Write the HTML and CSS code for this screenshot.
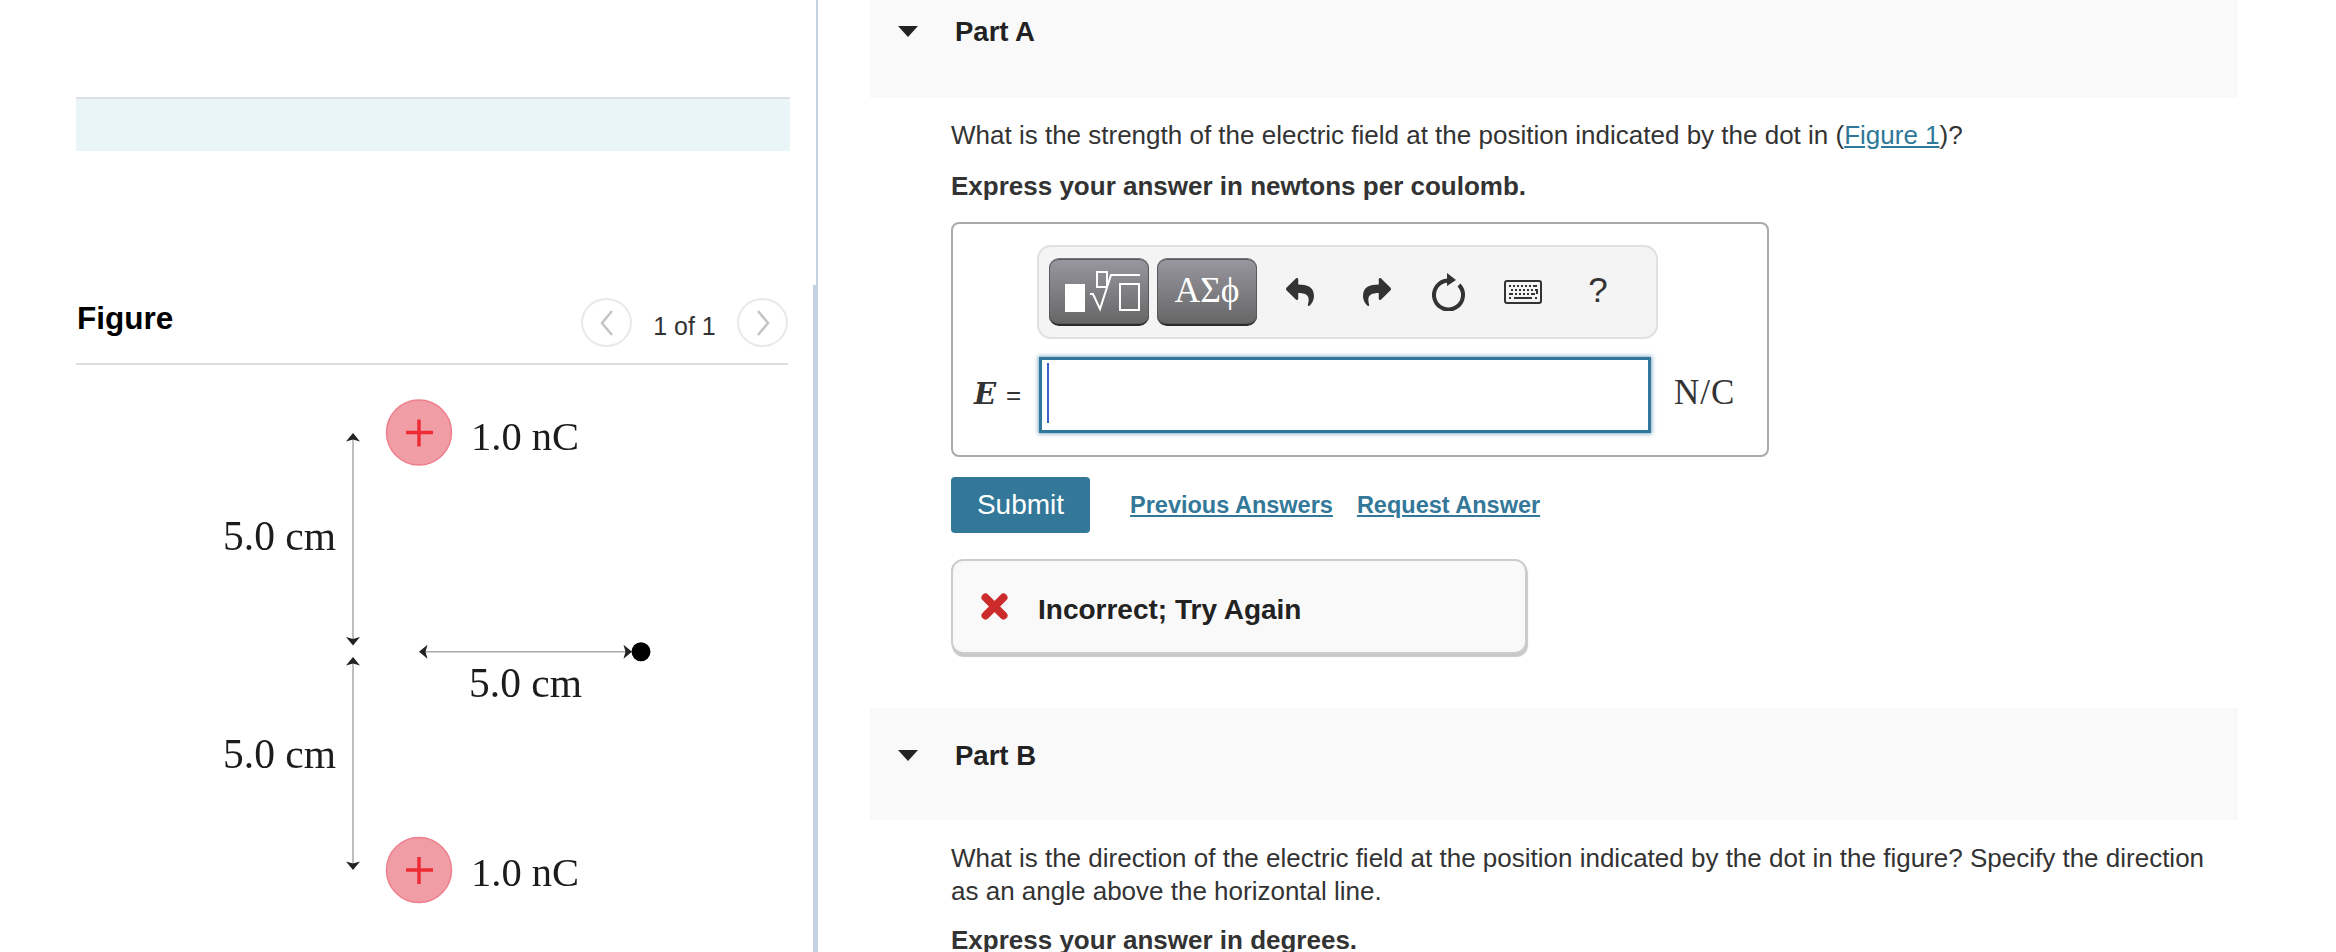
FILE: index.html
```html
<!DOCTYPE html>
<html lang="en">
<head>
<meta charset="utf-8">
<title>Part A</title>
<link rel="stylesheet" href="styles.css">
</head>
<body>
<div class="page">
  <aside class="left">
    <div class="strip"></div>
    <div class="fig-head">
      <h2 class="fig-title">Figure</h2>
      <div class="pager">
        <span class="pager-btn"><svg width="16" height="28" viewBox="0 0 16 28"><path class="chev" d="M13 2 3 14l10 12"/></svg></span>
        <span class="pager-text">1 of 1</span>
        <span class="pager-btn"><svg width="16" height="28" viewBox="0 0 16 28"><path class="chev" d="M3 2l10 12L3 26"/></svg></span>
      </div>
    </div>
    <svg class="figure" width="714" height="587" viewBox="76 365 714 587">
      <line class="dim" x1="353" y1="438" x2="353" y2="640"/>
      <line class="dim" x1="353" y1="662" x2="353" y2="865"/>
      <line class="dim" x1="425" y1="651.700" x2="626" y2="651.700"/>
      <path class="head" d="M353 433l7 8.500-7-2-7 2z"/>
      <path class="head" d="M353 645.500l7-8.500-7 2-7-2z"/>
      <path class="head" d="M353 657l7 8.500-7-2-7 2z"/>
      <path class="head" d="M353 870l7-8.500-7 2-7-2z"/>
      <path class="head" d="M419 651.700l8.500-7-2 7 2 7z"/>
      <path class="head" d="M632 651.700l-8.500-7 2 7-2 7z"/>
      <circle cx="641" cy="651.700" r="9.500"/>
      <circle class="charge" cx="419" cy="432.500" r="32.500"/>
      <path class="plus" d="M406 432.500h27M419 419.500v27"/>
      <circle class="charge" cx="419" cy="870" r="32.500"/>
      <path class="plus" d="M406 870h27M419 857v27"/>
      <text class="fig-label" x="471" y="450">1.0 nC</text>
      <text class="fig-label fig-label-cm" x="223" y="550">5.0 cm</text>
      <text class="fig-label fig-label-cm" x="469" y="697">5.0 cm</text>
      <text class="fig-label fig-label-cm" x="223" y="768">5.0 cm</text>
      <text class="fig-label" x="471" y="886">1.0 nC</text>
    </svg>
    <div class="scroll-thumb"></div>
  </aside>

  <main class="right">
    <div class="part-head part-head-a">
      <svg class="caret" width="20" height="11" viewBox="0 0 20 11"><path d="M0 0h20L10 11z"/></svg>
      <span class="part-title">Part A</span>
    </div>
    <section class="question question-a">
      <p class="q-text">What is the strength of the electric field at the position indicated by the dot in (<a class="fig-link" href="#">Figure 1</a>)?</p>
      <p class="q-hint">Express your answer in newtons per coulomb.</p>

      <div class="answer">
        <div class="toolbar">
          <button class="tool-btn tool-btn-a" type="button">
            <svg width="100" height="68" viewBox="0 0 100 68">
              <rect class="ico-fill" x="16" y="26" width="20" height="28"/>
              <rect class="ico-line" x="48" y="14" width="10" height="15"/>
              <path class="ico-line" d="M41 36h3l7 15 11-34h29"/>
              <rect class="ico-line" x="71" y="26" width="19" height="26"/>
            </svg>
          </button>
          <button class="tool-btn tool-btn-b" type="button">ΑΣϕ</button>
          <span class="slot slot-undo">
            <svg class="ico" width="28" height="32" viewBox="0 0 512 512" preserveAspectRatio="none"><path d="M8.309 189.836L184.313 37.851C199.719 24.546 224 35.347 224 56.015v80.053c160.629 1.839 288 34.032 288 186.258 0 61.441-39.581 122.309-83.333 154.132-13.653 9.931-33.111-2.533-28.077-18.631 45.344-145.012-21.507-183.51-176.59-185.742V360c0 20.7-24.3 31.453-39.687 18.164l-176.004-152c-11.071-9.562-11.086-26.753 0-36.328z"/></svg>
          </span>
          <span class="slot slot-redo">
            <svg class="ico flip" width="28" height="32" viewBox="0 0 512 512" preserveAspectRatio="none"><path d="M8.309 189.836L184.313 37.851C199.719 24.546 224 35.347 224 56.015v80.053c160.629 1.839 288 34.032 288 186.258 0 61.441-39.581 122.309-83.333 154.132-13.653 9.931-33.111-2.533-28.077-18.631 45.344-145.012-21.507-183.51-176.59-185.742V360c0 20.7-24.3 31.453-39.687 18.164l-176.004-152c-11.071-9.562-11.086-26.753 0-36.328z"/></svg>
          </span>
          <span class="slot slot-reset">
            <svg width="34" height="38" viewBox="0 0 34 38"><path class="reset-arc" d="M16 7.500A14.500 14.500 0 1 0 27 12"/><path class="reset-head" d="M15 0l9 7-9 6z"/></svg>
          </span>
          <span class="slot slot-kbd">
            <svg width="38" height="24" viewBox="0 0 38 24">
              <rect class="kbd-frame" x="1" y="1" width="36" height="22" rx="2"/>
              <path class="kbd-keys" d="M5 6h2M9 6h2M13 6h2M17 6h2M21 6h2M25 6h2M29 6h4M7 10h2M11 10h2M15 10h2M19 10h2M23 10h2M27 10h2M31 10h2v4M5 14h4M11 14h2M15 14h2M19 14h2M23 14h2M27 14h4M5 18h2M10 18h18M31 18h2"/>
            </svg>
          </span>
          <span class="slot slot-help">?</span>
        </div>
        <div class="input-row">
          <span class="var-label"><span class="var">E</span><span class="eq">=</span></span>
          <div class="math-input"><span class="text-caret"></span></div>
          <span class="unit">N/C</span>
        </div>
      </div>

      <div class="actions">
        <button class="submit" type="button">Submit</button>
        <a class="act-link" href="#">Previous Answers</a>
        <a class="act-link" href="#">Request Answer</a>
      </div>

      <div class="feedback">
        <svg class="x-icon" width="27" height="27" viewBox="0 0 27 27"><path class="x-mark" d="M4.500 4.500l18 18M22.500 4.500l-18 18"/></svg>
        <span class="feedback-text">Incorrect; Try Again</span>
      </div>
    </section>

    <div class="part-head part-head-b">
      <svg class="caret" width="20" height="11" viewBox="0 0 20 11"><path d="M0 0h20L10 11z"/></svg>
      <span class="part-title">Part B</span>
    </div>
    <section class="question question-b">
      <p class="q-text">What is the direction of the electric field at the position indicated by the dot in the figure? Specify the direction as an angle above the horizontal line.</p>
      <p class="q-hint">Express your answer in degrees.</p>
    </section>
  </main>
</div>
</body>
</html>
```

FILE: styles.css
```css
* { box-sizing: border-box; }
html, body { margin: 0; height: 100%; overflow: hidden; background: #fff; }
body { font-family: "Liberation Sans", Arial, sans-serif; color: #333; }
p, h2 { margin: 0; }

.page { display: flex; height: 952px; overflow: hidden; }

/* Left panel */
.left {
  position: relative;
  flex: 0 0 818px;
  padding-left: 76px;
  border-right: 2px solid #c3d1e2;
}
.strip {
  width: 714px;
  height: 54px;
  margin-top: 97px;
  background: #e9f5f7;
  border-top: 2px solid #dde0e2;
}
.fig-head {
  display: flex;
  justify-content: space-between;
  width: 712px;
  height: 214px;
  padding-top: 147px;
  border-bottom: 2px solid #dedede;
}
.fig-title { margin-left: 1px; font-size: 31.500px; line-height: 40px; font-weight: 700; color: #000; }
.pager { display: flex; align-items: flex-start; }
.pager-btn {
  display: flex;
  align-items: center;
  justify-content: center;
  width: 51px;
  height: 49px;
  border: 2px solid #e9e9e9;
  border-radius: 50%;
}
.chev { fill: none; stroke: #c4c4c4; stroke-width: 2.500; }
.pager-text { width: 105px; padding-top: 13px; text-align: center; font-size: 25px; line-height: 30px; color: #333; }
.figure { display: block; filter: blur(0.4px); }
.dim { stroke: #a8a8a8; stroke-width: 1.500; }
.head { fill: #222; }
.charge { fill: #f19da6; stroke: #ee7f8d; stroke-width: 1.500; }
.plus { fill: none; stroke: #ee2c36; stroke-width: 3.500; }
.fig-label { font-family: "Liberation Serif", "Times New Roman", serif; font-size: 40.500px; fill: #1c1c1c; }
.fig-label-cm { font-size: 41.500px; }
.scroll-thumb {
  position: absolute;
  top: 285px;
  right: -2px;
  bottom: 0;
  width: 5px;
  background: #c3d1e2;
}

/* Right panel */
.right { flex: 1; padding-left: 52px; min-width: 0; }
.part-head {
  display: flex;
  align-items: flex-start;
  width: 1368px;
  background: #f9f9f9;
}
.part-head-a { height: 98px; padding-top: 13px; }
.part-head-b { height: 112px; padding-top: 29px; margin-top: 54px; }
.caret { flex: none; margin: 13px 37px 0 28px; fill: #222; }
.part-title { font-size: 27.500px; line-height: 38px; font-weight: 700; color: #222; }

.question { padding-left: 81px; }
.question-a { padding-top: 21px; }
.question-b { padding-top: 22px; width: 1368px; padding-right: 30px; }
.q-text { font-size: 26px; line-height: 33px; color: #333; }
.q-hint { margin-top: 18px; font-size: 26px; line-height: 33px; font-weight: 700; color: #333; }
.question-b .q-hint { margin-top: 16px; }
.fig-link { color: #2e7898; text-decoration: underline; }

/* Answer box */
.answer {
  width: 818px;
  height: 235px;
  margin-top: 19px;
  padding: 21px 0 0 20px;
  border: 2px solid #aaa;
  border-radius: 8px;
}
.toolbar {
  display: flex;
  align-items: center;
  width: 621px;
  height: 94px;
  margin-left: 64px;
  padding-left: 10px;
  background: #f4f4f4;
  border: 2px solid #e0e0e0;
  border-radius: 14px;
}
.tool-btn {
  flex: none;
  width: 100px;
  height: 68px;
  padding: 0;
  border: 0;
  border-top: 1px solid #77757b;
  border-bottom: 2px solid #2a2a2a;
  border-radius: 10px;
  background: linear-gradient(#99979f, #666);
  color: #fff;
  box-shadow: inset 0 0 0 1px #59585d;
}
.tool-btn svg { display: block; margin-top: -1px; }
.tool-btn-b {
  margin-left: 8px;
  padding-bottom: 3px;
  font-family: "Liberation Serif", "Times New Roman", serif;
  font-size: 35.500px;
  line-height: 58px;
}
.ico-fill { fill: #fff; }
.ico-line { fill: none; stroke: #fff; stroke-width: 2; }
.slot { flex: none; display: flex; align-items: center; justify-content: center; height: 68px; }
.slot-undo { width: 76px; margin-left: 5px; }
.slot-redo { width: 77px; }
.slot-reset { width: 68px; }
.slot-kbd { width: 80px; }
.slot-help { width: 70px; font-size: 35px; color: #333; padding-bottom: 4px; }
.ico { fill: #333; }
.flip { transform: scaleX(-1); }
.reset-arc { fill: none; stroke: #333; stroke-width: 4; }
.reset-head { fill: #333; }
.kbd-frame { fill: none; stroke: #333; stroke-width: 2; }
.kbd-keys { fill: none; stroke: #333; stroke-width: 2; }

.input-row { display: flex; align-items: center; margin-top: 18px; }
.var-label {
  flex: none;
  display: flex;
  align-items: baseline;
  width: 66px;
  padding-bottom: 2px;
  font-size: 29px;
  color: #333;
  white-space: nowrap;
}
.var { width: 33px; padding-left: 1px; font-family: "DejaVu Serif", serif; font-weight: 700; font-style: italic; }
.eq { font-family: "Liberation Sans", Arial, sans-serif; font-size: 26px; }
.math-input {
  flex: none;
  width: 612px;
  height: 76px;
  padding: 3px 5px;
  background: #fff;
  border: 3px solid #30789b;
  box-shadow: 0 0 4px 1px rgba(48, 120, 155, .6);
}
.text-caret { display: block; width: 2px; height: 60px; background: #3a62c8; }
.unit {
  margin-left: 23px;
  padding-bottom: 4px;
  font-family: "Liberation Serif", "Times New Roman", serif;
  font-size: 35px;
  letter-spacing: 1px;
  color: #333;
}

/* Actions */
.actions { display: flex; align-items: center; margin-top: 20px; }
.submit {
  width: 139px;
  height: 56px;
  padding: 0;
  margin-right: 40px;
  border: 0;
  border-radius: 4px;
  background: #337899;
  color: #fff;
  font-family: "Liberation Sans", Arial, sans-serif;
  font-size: 28px;
}
.act-link {
  margin-right: 24px;
  font-size: 23.500px;
  font-weight: 700;
  color: #337899;
  text-decoration: underline;
}

/* Feedback */
.feedback {
  display: flex;
  align-items: center;
  gap: 30px;
  width: 576px;
  height: 95px;
  margin-top: 26px;
  padding-left: 28px;
  background: #f9f9f9;
  border: 2px solid #ccc;
  border-radius: 12px;
  box-shadow: 1px 3px 1px #c8c8c8;
}
.x-mark { fill: none; stroke: #cc2b2b; stroke-width: 8; stroke-linecap: round; }
.feedback-text { padding-top: 6px; font-size: 28px; font-weight: 700; color: #222; }
```
